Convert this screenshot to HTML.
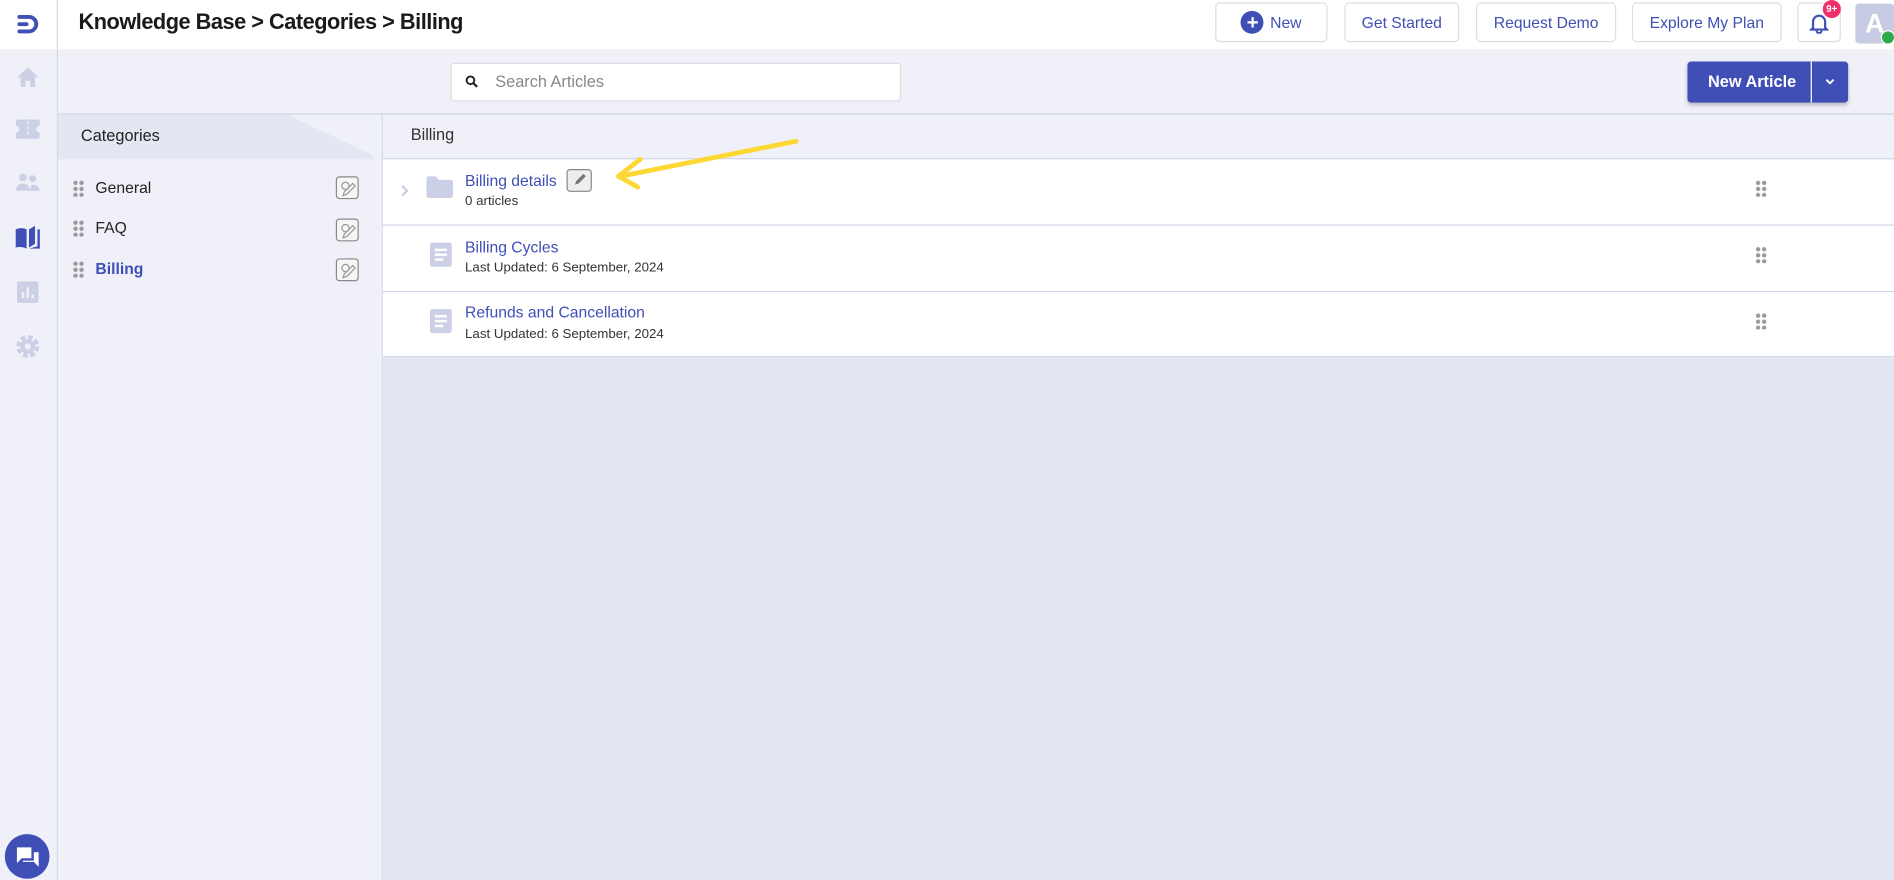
<!DOCTYPE html>
<html><head><meta charset="utf-8"><style>
*{box-sizing:border-box;margin:0;padding:0}
html,body{width:1894px;height:880px;overflow:hidden;background:#f0f1f8;font-family:"Liberation Sans",Arial,sans-serif}
#w{width:1568px;height:729px;position:relative;transform:scale(1.20791,1.2071);transform-origin:0 0;background:#f0f1f8}
.a{position:absolute}
.btn{position:absolute;top:2px;height:33px;border:1px solid #dcdde3;border-radius:4px;background:#fff;color:#3f4fb5;font-size:13px;display:flex;align-items:center;justify-content:center}
.cat{position:absolute;left:60px;font-size:13px;color:#222;display:flex;align-items:center}
.dots{width:10px;height:14px;margin-right:9px;background:radial-gradient(circle,#9a9a9a 1.6px,transparent 2px) 0 0/5px 5px}
.ed{position:absolute;left:278px;width:19px;height:19px;border:1px solid #888;border-radius:3px;background:#f6f6f6}
.ed svg{position:absolute;left:2px;top:2px}
.row{position:absolute;left:317px;width:1251px;background:#fff;border-bottom:1px solid #cfd2ea}
.t{position:absolute;left:68px;font-size:13px;color:#3f4fb5}
.s{position:absolute;left:68px;font-size:11px;color:#333}
.doc{position:absolute;left:39px;width:18px;height:20px;background:#ccd0e6;border-radius:2px}
.doc i{position:absolute;left:4px;height:2px;background:#fff;width:10px}
.dr{position:absolute;left:1136px;width:10px;height:14px;background:radial-gradient(circle,#9a9a9a 1.6px,transparent 2px) 0 0/5px 5px}
</style></head><body><div id="w">
<div class="a" style="left:0;top:0;width:1568px;height:42px;background:#fff;border-bottom:1px solid #eceef4"></div>
<div class="a" style="left:47px;top:0;width:1px;height:729px;background:#d8dae6"></div>
<svg class="a" style="left:13px;top:10px" width="20" height="20" viewBox="0 0 20 20"><path d="M3 4 H11 A6 6 0 0 1 11 16 H3" fill="none" stroke="#3f4fb5" stroke-width="3.2" stroke-linecap="round"/><path d="M3 10 H9" stroke="#3f4fb5" stroke-width="3.2" stroke-linecap="round"/></svg>
<div class="a" style="left:65px;top:8px;font-size:18px;font-weight:bold;color:#1a1a1a;letter-spacing:-0.4px">Knowledge Base &gt; Categories &gt; Billing</div>
<div class="btn" style="left:1006px;width:93px"><span style="width:19px;height:19px;border-radius:50%;background:#3f4fb5;color:#fff;display:inline-flex;align-items:center;justify-content:center;font-size:17px;font-weight:bold;margin-right:5px;line-height:1">+</span>New</div>
<div class="btn" style="left:1113px;width:95px">Get Started</div>
<div class="btn" style="left:1222px;width:116px">Request Demo</div>
<div class="btn" style="left:1351px;width:124px">Explore My Plan</div>
<div class="btn" style="left:1488px;width:36px"><svg width="16" height="18" viewBox="0 0 16 18"><path d="M3 13 V8 A5 5 0 0 1 13 8 V13 L14.5 14.5 H1.5 Z M6 15.5 A2 2 0 0 0 10 15.5" fill="none" stroke="#3f4fb5" stroke-width="1.8"/></svg></div>
<div class="a" style="left:1509px;top:0;width:15px;height:15px;border-radius:50%;background:#f0306a;color:#fff;font-size:8px;font-weight:bold;text-align:center;line-height:15px">9+</div>
<div class="a" style="left:1536px;top:3px;width:32px;height:33px;background:#c7cbe4;border-radius:3px;color:#fff;font-size:22px;font-weight:bold;text-align:center;line-height:33px">A</div>
<div class="a" style="left:1557px;top:25px;width:12px;height:12px;border-radius:50%;background:#2eaa4a;border:1px solid #fff"></div>
<svg class="a" style="left:13px;top:55px" width="20" height="18"><path d="M10 1 L19 9 H16 V17 H12 V12 H8 V17 H4 V9 H1 Z" fill="#ccd0e6"/></svg>
<svg class="a" style="left:13px;top:99px" width="20" height="16"><path d="M2 0 H18 Q20 0 20 2 V5 A3 3 0 0 0 20 11 V14 Q20 16 18 16 H2 Q0 16 0 14 V11 A3 3 0 0 0 0 5 V2 Q0 0 2 0 Z" fill="#ccd0e6"/><path d="M10 2 V14" stroke="#f0f1f8" stroke-width="1.5" stroke-dasharray="2 2"/></svg>
<svg class="a" style="left:13px;top:143px" width="20" height="16"><circle cx="6" cy="4" r="3.2" fill="#ccd0e6"/><circle cx="14" cy="5" r="2.8" fill="#ccd0e6"/><path d="M0 15 Q1 9 6 9 Q11 9 12 15 Z M12 15 Q12 10 14 10 Q19 10 20 15 Z" fill="#ccd0e6"/></svg>
<svg class="a" style="left:12px;top:187px" width="22" height="20"><path d="M1 3 Q6 1 10 3 V19 Q6 17 1 18 Z M12 3 L17 0 V15 L12 18 Z M19 3 H21 V19 H12 L19 17 Z" fill="#3f4fb5"/></svg>
<svg class="a" style="left:14px;top:233px" width="18" height="18"><rect width="18" height="18" rx="2" fill="#ccd0e6"/><path d="M5 14 V9 M9 14 V5 M13 14 V11" stroke="#f0f1f8" stroke-width="2"/></svg>
<svg class="a" style="left:12px;top:276px" width="22" height="22" viewBox="0 0 22 22"><circle cx="11" cy="11" r="7" fill="none" stroke="#ccd0e6" stroke-width="5" stroke-dasharray="3.5 2"/><circle cx="11" cy="11" r="6" fill="#ccd0e6"/><circle cx="11" cy="11" r="2.5" fill="#f0f1f8"/></svg>
<div class="a" style="left:4px;top:691px;width:37px;height:37px;border-radius:50%;background:#3f4fb5"></div>
<svg class="a" style="left:13px;top:701px" width="20" height="18"><path d="M1 1 H13 V10 H5 L1 14 Z" fill="#fff"/><path d="M15 5 H19 V17 L15 13 H6 V12 H15 Z" fill="#fff"/></svg>
<div class="a" style="left:373px;top:52px;width:373px;height:32px;background:#fff;border:1px solid #dcdde3;border-radius:3px"></div>
<svg class="a" style="left:385px;top:62px" width="11" height="11"><circle cx="4.5" cy="4.5" r="3.2" fill="none" stroke="#222" stroke-width="1.6"/><path d="M7 7 L10 10" stroke="#222" stroke-width="1.8"/></svg>
<div class="a" style="left:410px;top:60px;font-size:13.5px;color:#888">Search Articles</div>
<div class="a" style="left:1397px;top:51px;width:133px;height:34px;background:#3f4fb5;border-radius:3px;box-shadow:0 2px 3px rgba(0,0,0,.2)"></div>
<div class="a" style="left:1414px;top:60px;font-size:13.5px;font-weight:bold;color:#fff">New Article</div>
<div class="a" style="left:1499px;top:51px;width:1px;height:34px;background:#fff"></div>
<svg class="a" style="left:1510px;top:64px" width="10" height="8"><path d="M2 2 L5 5 L8 2" fill="none" stroke="#fff" stroke-width="1.6"/></svg>
<div class="a" style="left:48px;top:94px;width:1520px;height:1px;background:#cfd2ea"></div>
<svg class="a" style="left:48px;top:95px" width="268" height="37"><path d="M0 0 H237 L262 37 H0 Z" fill="#e4e6f2"/><path d="M190 0 L268 37 L268 0 Z" fill="#f0f1f8"/></svg>
<div class="a" style="left:67px;top:105px;font-size:13.5px;color:#222">Categories</div>
<div class="a" style="left:316px;top:95px;width:1px;height:634px;background:#d8dae6"></div>
<div class="cat" style="top:148px"><span class="dots"></span>General</div>
<div class="cat" style="top:181px"><span class="dots"></span>FAQ</div>
<div class="cat" style="top:215px;color:#3f4fb5;font-weight:bold"><span class="dots"></span>Billing</div>
<div class="ed" style="top:146px"><svg width="14" height="14"><circle cx="5" cy="5" r="3" fill="none" stroke="#999"/><path d="M3 13 L4 10 L11 3 L13 5 L6 12 Z" fill="none" stroke="#999"/></svg></div>
<div class="ed" style="top:181px"><svg width="14" height="14"><circle cx="5" cy="5" r="3" fill="none" stroke="#999"/><path d="M3 13 L4 10 L11 3 L13 5 L6 12 Z" fill="none" stroke="#999"/></svg></div>
<div class="ed" style="top:214px"><svg width="14" height="14"><circle cx="5" cy="5" r="3" fill="none" stroke="#999"/><path d="M3 13 L4 10 L11 3 L13 5 L6 12 Z" fill="none" stroke="#999"/></svg></div>
<div class="a" style="left:340px;top:104px;font-size:13.5px;color:#333">Billing</div>
<div class="a" style="left:317px;top:131px;width:1251px;height:1px;background:#cfd2ea"></div>
<div class="a" style="left:317px;top:296px;width:1251px;height:433px;background:#e4e7f1"></div>
<div class="row" style="top:132px;height:55px">
<svg class="a" style="left:14px;top:20px" width="8" height="12"><path d="M2 2 L6 6 L2 10" fill="none" stroke="#c7cbe4" stroke-width="1.8"/></svg>
<svg class="a" style="left:36px;top:14px" width="22" height="18"><path d="M0 2 Q0 0 2 0 H8 L10 3 H20 Q22 3 22 5 V16 Q22 18 20 18 H2 Q0 18 0 16 Z" fill="#ccd0e6"/></svg>
<div class="t" style="top:10px">Billing details</div>
<div class="a" style="left:152px;top:8px;width:21px;height:19px;border:1px solid #888;border-radius:3px;background:#eee"></div>
<svg class="a" style="left:157px;top:11px" width="12" height="12"><path d="M2 10 L3 7 L9 1 L11 3 L5 9 Z" fill="#777"/></svg>
<div class="s" style="top:29px">0 articles</div>
<div class="dr" style="top:17px"></div></div>
<div class="row" style="top:187px;height:55px">
<div class="doc" style="top:14px"><i style="top:5px"></i><i style="top:9px"></i><i style="top:13px;width:7px"></i></div>
<div class="t" style="top:10px">Billing Cycles</div><div class="s" style="top:29px">Last Updated: 6 September, 2024</div>
<div class="dr" style="top:17px"></div></div>
<div class="row" style="top:242px;height:54px">
<div class="doc" style="top:14px"><i style="top:5px"></i><i style="top:9px"></i><i style="top:13px;width:7px"></i></div>
<div class="t" style="top:9px">Refunds and Cancellation</div><div class="s" style="top:29px">Last Updated: 6 September, 2024</div>
<div class="dr" style="top:17px"></div></div>
<svg class="a" style="left:500px;top:110px" width="170" height="50"><path d="M159 7 L14 36 M30 22 L12 36 L28 45" fill="none" stroke="#fdd835" stroke-width="4" stroke-linecap="round" stroke-linejoin="round"/></svg>
</div></body></html>
